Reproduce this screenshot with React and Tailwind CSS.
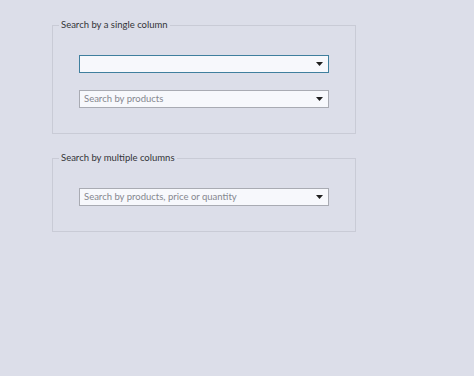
const font = { fontFamily: 'Lato, "Open Sans", sans-serif' };

function Combo({ placeholder, focused }) {
  return (
    <div
      className={`flex h-[18px] w-[250px] items-center justify-between border bg-[#f7f8fc] pl-[4px] pr-[5px] ${
        focused ? 'border-[#3f7f9e]' : 'border-[#a9abb3]'
      }`}
    >
      <span className="text-[9.5px] leading-none text-[#85878f]">{placeholder}</span>
      <svg width="7" height="4" viewBox="0 0 7 4" className="shrink-0">
        <path d="M0 0H7L3.5 4Z" fill="#1f1f1f" />
      </svg>
    </div>
  );
}

function Group({ title, children, className }) {
  return (
    <fieldset className={`w-[304px] border border-[#c9cbd6] px-[26px] ${className}`}>
      <legend className="ml-[-20px] px-[2px] text-[9.5px] leading-[16px] text-[#333438]">{title}</legend>
      {children}
    </fieldset>
  );
}

export default function App() {
  return (
    <div className="h-[376px] w-[474px] bg-[#dcdee9] pl-[52px] pt-[17px]" style={font}>
      <Group title="Search by a single column" className="h-[117px]">
        <div className="mt-[22px] flex flex-col gap-[17px]">
          <Combo focused placeholder="" />
          <Combo placeholder="Search by products" />
        </div>
      </Group>
      <Group title="Search by multiple columns" className="mt-[16px] h-[82px]">
        <div className="mt-[22px]">
          <Combo placeholder="Search by products, price or quantity" />
        </div>
      </Group>
    </div>
  );
}
